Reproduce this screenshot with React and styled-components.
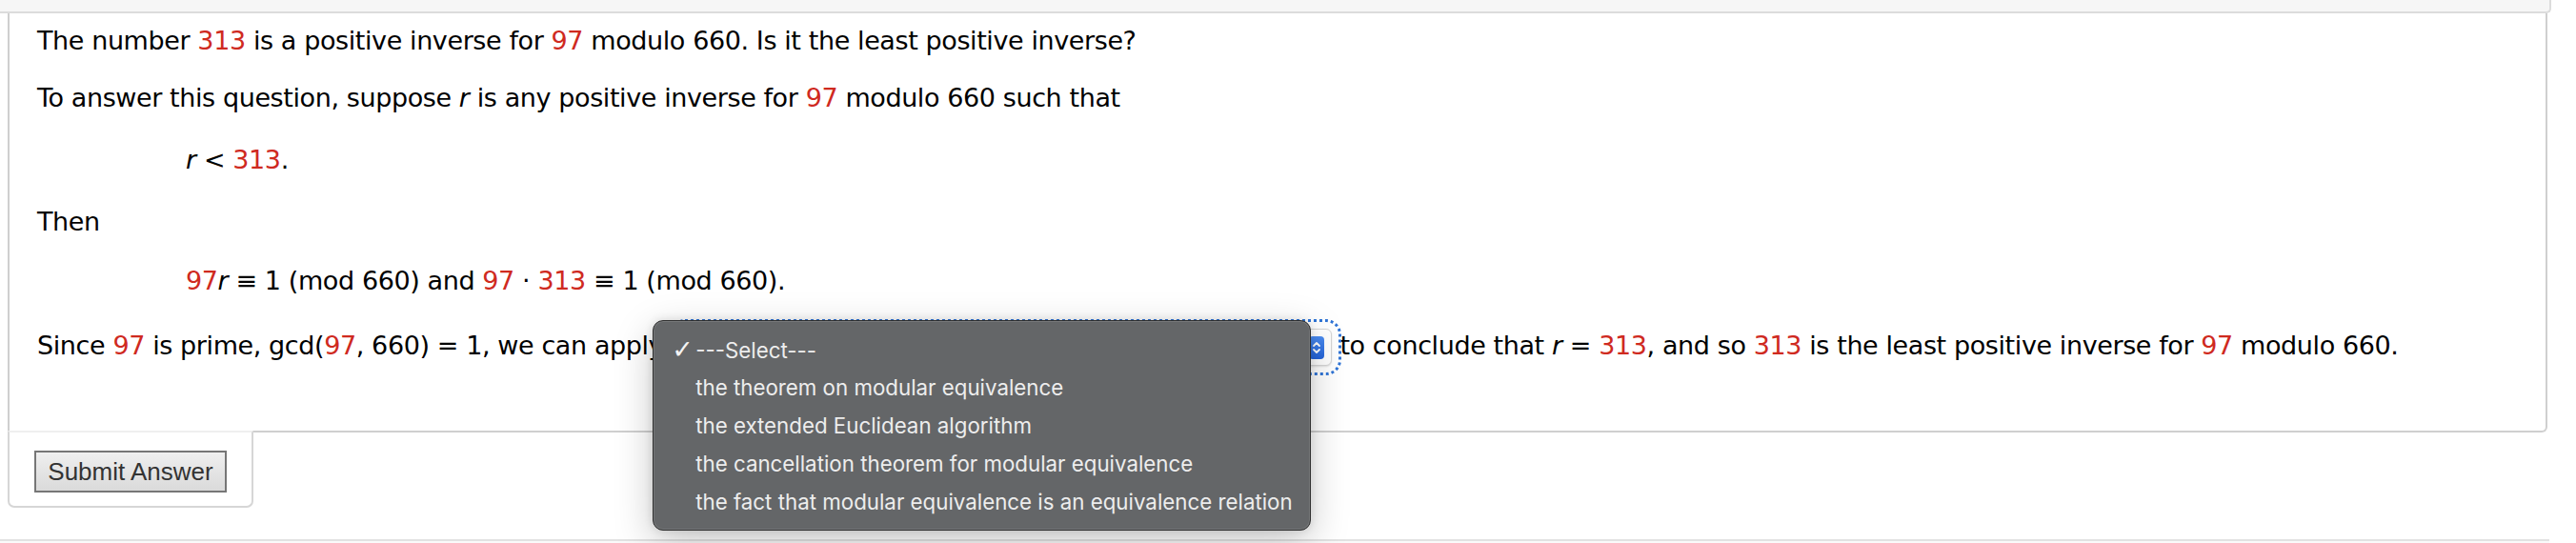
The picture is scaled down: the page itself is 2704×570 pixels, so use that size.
import React from "react";
import styled, { createGlobalStyle } from "styled-components";

const Global = createGlobalStyle`
  html, body { margin: 0; padding: 0; background: #ffffff; }
  body { width: 2704px; height: 570px; overflow: hidden; }
`;

const Page = styled.div`
  position: relative;
  width: 2704px;
  height: 570px;
  font-family: "DejaVu Sans", Verdana, sans-serif;
  color: #000;
`;

const TopBand = styled.div`
  width: 2676px;
  height: 12px;
  background: #f6f6f6;
  border-bottom: 2px solid #dcdcdc;
  border-right: 2px solid #dcdcdc;
  border-bottom-right-radius: 5px;
  box-sizing: content-box;
`;

const Panel = styled.div`
  margin-left: 8px;
  width: 2666px;
  box-sizing: border-box;
  border: 2px solid #cfcfcf;
  border-top: none;
  border-bottom-right-radius: 6px;
  padding: 9px 0 0 29px;
  height: 440px;
  font-size: 27px;
  letter-spacing: -0.4px;
`;

const Para = styled.div`
  line-height: 40px;
  height: 40px;
  margin-bottom: ${(p) => p.$gap || 0}px;
  padding-left: ${(p) => (p.$indent ? 156 : 0)}px;
  white-space: nowrap;
`;

const Red = styled.span`
  color: #cf2a1f;
`;

const Var = styled.i`
  font-style: italic;
`;

const SelectBox = styled.span`
  position: relative;
  display: inline-flex;
  justify-content: flex-end;
  align-items: center;
  box-sizing: border-box;
  width: 685px;
  height: 39px;
  margin-left: 17px;
  padding-right: 7px;
  vertical-align: middle;
  border: 1px solid #d6d6d6;
  border-radius: 6px;
  background: #ffffff;
  box-shadow: 0 1px 2px rgba(0, 0, 0, 0.12);
  outline: 3px dotted #2f74d6;
  outline-offset: 7px;
  letter-spacing: 0;
`;

const ArrowBtn = styled.span`
  display: inline-flex;
  align-items: center;
  justify-content: center;
  width: 16px;
  height: 24px;
  border-radius: 4px;
  background: linear-gradient(#4a8bf0, #2463d9);
`;

const Menu = styled.div`
  position: absolute;
  left: -29px;
  top: -10px;
  width: 691px;
  height: 221px;
  box-sizing: border-box;
  padding: 10px 0 0 19px;
  background: #646668;
  border: 1px solid #2e2e2e;
  border-radius: 11px;
  box-shadow: inset 0 0 0 1px rgba(255, 255, 255, 0.12),
    0 12px 40px rgba(0, 0, 0, 0.22), 0 0 10px rgba(0, 0, 0, 0.12);
  z-index: 10;
  font-family: Inter, "Liberation Sans", sans-serif;
  font-size: 22.3px;
  color: #ededed;
  text-align: left;
`;

const Item = styled.div`
  display: flex;
  align-items: baseline;
  height: 40px;
  line-height: 40px;
  white-space: nowrap;
`;

const Check = styled.span`
  width: 25px;
  flex: none;
  font-family: "DejaVu Sans", sans-serif;
  font-size: 27px;
  color: #f4f4f4;
`;

const ButtonBox = styled.div`
  margin-left: 8px;
  margin-top: -2px;
  width: 258px;
  height: 81px;
  box-sizing: border-box;
  border: 2px solid #d6d6d6;
  border-top-color: #efefef;
  border-radius: 0 0 7px 7px;
  padding: 19px 0 0 26px;
`;

const SubmitButton = styled.button`
  width: 202px;
  height: 44px;
  margin: 0;
  padding: 0;
  border: 2px solid #767676;
  border-radius: 0;
  background: linear-gradient(#efefef, #dadada);
  font-family: "Liberation Sans", Arial, sans-serif;
  font-size: 26px;
  color: #333;
`;

const BottomLine = styled.div`
  position: absolute;
  left: 0;
  top: 566px;
  width: 2676px;
  border-top: 2px solid #e2e2e2;
  height: 2px;
  background: #fafafa;
`;

const options = [
  "the theorem on modular equivalence",
  "the extended Euclidean algorithm",
  "the cancellation theorem for modular equivalence",
  "the fact that modular equivalence is an equivalence relation",
];

export default function App() {
  return (
    <Page>
      <Global />
      <TopBand />
      <Panel>
        <Para $gap={20}>
          The number <Red>313</Red> is a positive inverse for <Red>97</Red> modulo 660. Is it the least positive inverse?
        </Para>
        <Para $gap={25}>
          To answer this question, suppose <Var>r</Var> is any positive inverse for <Red>97</Red> modulo 660 such that
        </Para>
        <Para $gap={25} $indent>
          <Var>r</Var> &lt; <Red>313</Red>.
        </Para>
        <Para $gap={22}>Then</Para>
        <Para $gap={28} $indent>
          <Red>97</Red>
          <Var>r</Var> ≡ 1 (mod 660) and <Red>97</Red> · <Red>313</Red> ≡ 1 (mod 660).
        </Para>
        <Para>
          Since <Red>97</Red> is prime, gcd(<Red>97</Red>, 660) = 1, we can apply
          <SelectBox>
            <ArrowBtn>
              <svg width="10" height="16" viewBox="0 0 10 16" fill="none">
                <path d="M2 6 L5 3 L8 6" stroke="#fff" strokeWidth="1.8" strokeLinecap="round" strokeLinejoin="round" />
                <path d="M2 10 L5 13 L8 10" stroke="#fff" strokeWidth="1.8" strokeLinecap="round" strokeLinejoin="round" />
              </svg>
            </ArrowBtn>
            <Menu>
              <Item>
                <Check>✓</Check>---Select---
              </Item>
              {options.map((o) => (
                <Item key={o}>
                  <Check />
                  {o}
                </Item>
              ))}
            </Menu>
          </SelectBox>{" "}
          to conclude that <Var>r</Var> = <Red>313</Red>, and so <Red>313</Red> is the least positive inverse for <Red>97</Red> modulo 660.
        </Para>
      </Panel>
      <ButtonBox>
        <SubmitButton>Submit Answer</SubmitButton>
      </ButtonBox>
      <BottomLine />
    </Page>
  );
}
